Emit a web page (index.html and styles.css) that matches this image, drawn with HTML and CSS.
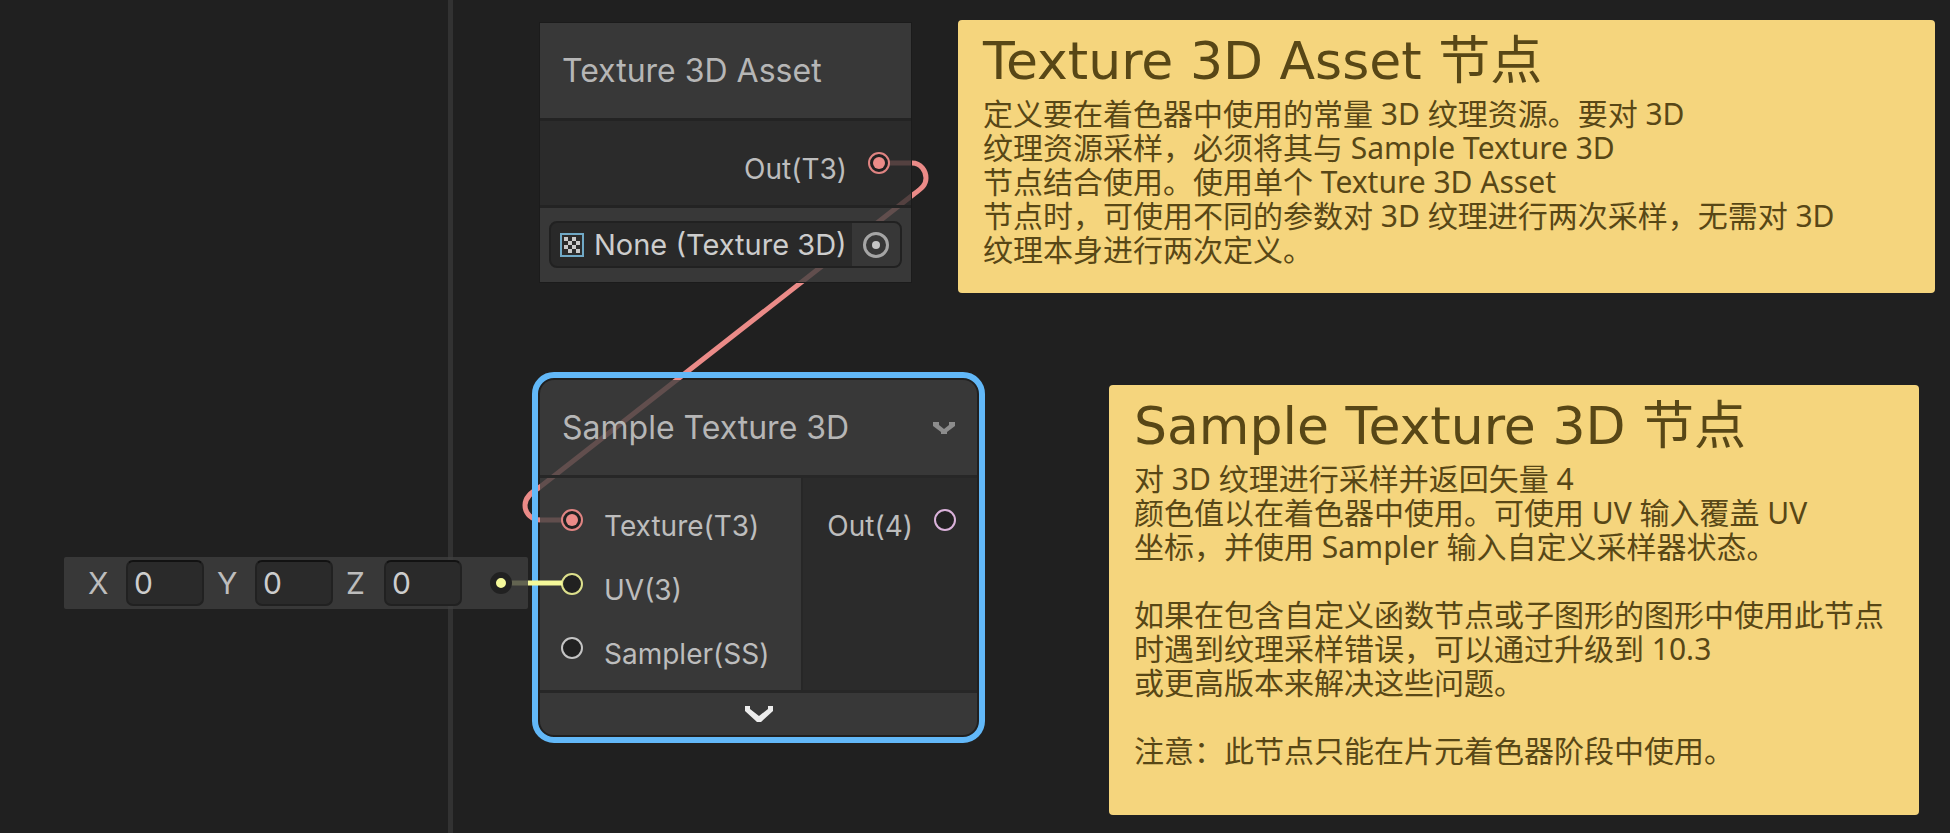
FILE: index.html
```html
<!DOCTYPE html>
<html lang="zh-CN">

<head>
  <meta charset="UTF-8">
  <meta name="viewport" content="width=device-width, initial-scale=1.0">
  <title>Texture 3D Asset</title>
  <link rel="stylesheet" href="styles.css">
</head>

<body>
  <main class="graph">
    <div class="grid-line"></div>
    <!-- texture edge, runs behind the nodes -->
    <svg class="edges" width="1000" height="800">
      <path class="edge-t3" d="M879 163 H912 C921 163 926 171 926 178 C926 185 922 188 914 194 L540 487 C530 493 525 498 525 505 C525 514 532 520 541 520 H572" />
    </svg>

    <section class="node asset-node">
      <header class="node-title">Texture 3D Asset</header>
      <div class="outputs">
        <div class="port-row"><span>Out(T3)</span><i class="port t3 on"></i></div>
      </div>
      <div class="node-footer">
        <div class="object-field">
          <svg class="texture-icon" width="24" height="24" viewBox="0 0 24 24">
            <rect x="1" y="1" width="22" height="22" fill="#2b2b2b" stroke="#70a9c6" stroke-width="2" />
            <path fill="#c8c8c8" d="M4 4h4v4h-4z M12 4h4v4h-4z M8 8h4v4h-4z M16 8h4v4h-4z M4 12h4v4h-4z M12 12h4v4h-4z M8 16h4v4h-4z M16 16h4v4h-4z" />
          </svg>
          <span class="object-name">None (Texture 3D)</span>
          <button class="picker" type="button" aria-label="Select Texture 3D">
            <svg width="28" height="28" viewBox="0 0 28 28">
              <circle cx="14" cy="14" r="11.5" fill="none" stroke="#a5a5a5" stroke-width="3" />
              <circle cx="14" cy="14" r="4" fill="#c4c4c4" />
            </svg>
          </button>
        </div>
      </div>
    </section>

    <section class="node sample-node">
      <header class="node-title">Sample Texture 3D
        <button class="collapse" type="button" aria-label="Collapse">
          <svg width="22" height="14" viewBox="0 0 22 14">
            <path d="M0 1 H6 V4 L11 8 L16 4 V1 H22 V5 L14 11 V13 H8 V11 L0 5 Z" fill="#8c8c8c" />
          </svg>
        </button>
      </header>
      <div class="ports">
        <div class="inputs">
          <div class="port-row"><i class="port t3 on"></i><span>Texture(T3)</span></div>
          <div class="port-row"><i class="port v3"></i><span>UV(3)</span></div>
          <div class="port-row"><i class="port ss"></i><span>Sampler(SS)</span></div>
        </div>
        <div class="outputs">
          <div class="port-row"><span>Out(4)</span><i class="port v4"></i></div>
        </div>
      </div>
      <button class="preview" type="button" aria-label="Preview">
        <svg width="30" height="18" viewBox="0 0 30 18">
          <path d="M1 1 H6 V4 L15 11 L24 4 V1 H29 V6 L17 17 H13 L1 6 Z" fill="#ececec" />
        </svg>
      </button>
    </section>

    <svg class="edges" width="1000" height="800">
      <path class="edge-v3" d="M501 583 H562" />
    </svg>

    <form class="vector-input">
      <label for="x">X</label><input id="x" type="text" value="0">
      <label for="y">Y</label><input id="y" type="text" value="0">
      <label for="z">Z</label><input id="z" type="text" value="0">
      <i class="dot"></i>
    </form>

    <article class="note asset-note">
      <h2>Texture 3D Asset 节点</h2>
      <p>定义要在着色器中使用的常量 3D 纹理资源。要对 3D<br>
        纹理资源采样，必须将其与 Sample Texture 3D<br>
        节点结合使用。使用单个 Texture 3D Asset<br>
        节点时，可使用不同的参数对 3D 纹理进行两次采样，无需对 3D<br>
        纹理本身进行两次定义。</p>
    </article>

    <article class="note sample-note">
      <h2>Sample Texture 3D 节点</h2>
      <p>对 3D 纹理进行采样并返回矢量 4<br>
        颜色值以在着色器中使用。可使用 UV 输入覆盖 UV<br>
        坐标，并使用 Sampler 输入自定义采样器状态。</p>
      <p>如果在包含自定义函数节点或子图形的图形中使用此节点<br>
        时遇到纹理采样错误，可以通过升级到 10.3<br>
        或更高版本来解决这些问题。</p>
      <p>注意：此节点只能在片元着色器阶段中使用。</p>
    </article>
  </main>
</body>

</html>
```

FILE: styles.css
```css
* {
  margin: 0;
  padding: 0;
  box-sizing: border-box;
}

body {
  background: #202020;
  font-family: Inter, "Liberation Sans", sans-serif;
  font-size: 30px;
  line-height: 36px;
  color: #bdbdbd;
}

button {
  border: 0;
  background: none;
  display: flex;
  align-items: center;
  justify-content: center;
}

.graph {
  position: relative;
  height: 100vh;
  overflow: hidden;
}

.grid-line {
  position: absolute;
  left: 448px;
  top: 0;
  width: 5px;
  height: 100%;
  background: #323232;
}

.edges {
  position: absolute;
  left: 0;
  top: 0;
  fill: none;
  stroke-width: 5;
  pointer-events: none;
}

.edge-t3 {
  stroke: #eb8b88;
}

.edge-v3 {
  stroke: #f5f99a;
}

/* nodes */
.node {
  position: absolute;
  white-space: nowrap;
}

.asset-node {
  left: 540px;
  top: 23px;
  width: 371px;
  box-shadow: 0 0 0 1px #1b1b1b;
}

.sample-node {
  left: 532px;
  top: 372px;
  width: 453px;
  padding: 2px;
  border: 6px solid #62b8f8;
  border-radius: 22px;
}

.node-title {
  display: flex;
  justify-content: space-between;
  align-items: center;
  height: 95px;
  padding: 0 22px;
  font-size: 32px;
  color: #b6b6b6;
  background: rgba(63, 63, 63, .8);
}

.sample-node .node-title {
  border-radius: 14px 14px 0 0;
}

.ports {
  display: flex;
  border-top: 3px solid #272727;
  border-bottom: 3px solid #272727;
}

.inputs {
  width: 261px;
  padding: 10px 21px;
  background: rgba(63, 63, 63, .8);
}

.outputs {
  flex: 1;
  padding: 10px 21px;
  background: rgba(46, 46, 46, .8);
}

.sample-node .outputs {
  border-left: 2px solid #272727;
}

.asset-node .outputs {
  border-top: 3px solid #232323;
  border-bottom: 3px solid #232323;
}

.port-row {
  display: flex;
  align-items: center;
  gap: 21px;
  height: 64px;
  font-size: 28px;
}

.port-row span {
  padding-top: 12px;
}

.outputs .port-row {
  justify-content: flex-end;
}

.port {
  flex-shrink: 0;
  width: 22px;
  height: 22px;
  border: 2px solid;
  border-radius: 50%;
  background: #212121;
}

.port.on::after {
  content: "";
  display: block;
  width: 12px;
  height: 12px;
  margin: 3px;
  border-radius: 50%;
  background: #eb8b88;
}

.t3 {
  color: #e08482;
}

.v3 {
  color: #dde08c;
}

.ss {
  color: #c4c4c4;
}

.v4 {
  color: #dab2da;
}

.node-footer {
  padding: 13px 9px 14px;
  background: rgba(63, 63, 63, .8);
}

.object-field {
  display: flex;
  align-items: center;
  height: 47px;
  padding-left: 9px;
  border: 2px solid #212121;
  border-radius: 8px;
  background: #292929;
  overflow: hidden;
}

.object-name {
  flex: 1;
  padding-left: 10px;
  font-size: 29px;
  color: #cdcdcd;
}

.picker {
  width: 48px;
  height: 100%;
  background: #373737;
}

.preview {
  width: 100%;
  height: 42px;
  border-radius: 0 0 14px 14px;
  background: rgba(63, 63, 63, .8);
}

/* default value of the UV port */
.vector-input {
  position: absolute;
  left: 64px;
  top: 557px;
  display: flex;
  align-items: center;
  height: 52px;
  padding: 0 16px 0 24px;
  border-radius: 2px;
  background: rgba(63, 63, 63, .8);
}

.vector-input label {
  width: 38px;
}

.vector-input input {
  width: 78px;
  height: 46px;
  margin-right: 13px;
  padding-left: 6px;
  border: 2px solid #212121;
  border-top-color: #121212;
  border-radius: 7px;
  background: #2a2a2a;
  color: #cdcdcd;
  font: inherit;
}

.dot {
  width: 22px;
  height: 22px;
  margin-left: 15px;
  border: 6px solid #212121;
  border-radius: 50%;
  background: #f5f99a;
}

/* sticky notes */
.note {
  position: absolute;
  padding: 9px 25px;
  border-radius: 4px;
  background: #f5d57d;
  color: #584716;
  font-family: "Noto Sans", "Noto Sans CJK SC", sans-serif;
  line-height: 34px;
  white-space: nowrap;
}

.note h2 {
  margin-bottom: 4px;
  font-family: "DejaVu Sans", "Noto Sans CJK SC", sans-serif;
  font-size: 52px;
  font-weight: 400;
  line-height: 64px;
}

.note p {
  margin-bottom: 34px;
}

.asset-note {
  left: 958px;
  top: 20px;
  width: 977px;
  height: 273px;
}

.sample-note {
  left: 1109px;
  top: 385px;
  width: 810px;
  height: 430px;
}
```
